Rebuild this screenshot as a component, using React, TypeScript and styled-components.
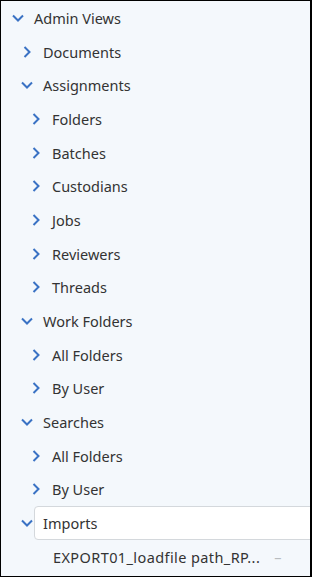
import styled, { createGlobalStyle } from "styled-components";

const GlobalStyle = createGlobalStyle`
  html, body {
    margin: 0;
    padding: 0;
    background: #ffffff;
  }
`;

const Panel = styled("div")`
  width: 312px;
  height: 577px;
  box-sizing: border-box;
  border: 1px solid #000;
  border-right-width: 2px;
  background: #f4f8fc;
  overflow: hidden;
  font-family: "Noto Sans", sans-serif;
  font-size: 14.5px;
  color: #333;
`;

const Row = styled("div")<{ $level: number }>`
  height: 33.7px;
  display: flex;
  align-items: center;
  padding-left: ${(p) => 10 + p.$level * 9}px;
  box-sizing: border-box;
`;

const Toggle = styled("span")`
  width: 14px;
  height: 16px;
  display: flex;
  align-items: center;
  justify-content: center;
  flex-shrink: 0;
  margin-right: 9px;
`;

const Label = styled("span")<{ $selected?: boolean }>`
  flex: 1;
  display: flex;
  align-items: center;
  height: 32px;
  margin-left: ${(p) => (p.$selected ? "-9px" : "0")};
  padding-left: ${(p) => (p.$selected ? "8px" : "0")};
  margin-right: ${(p) => (p.$selected ? "-4px" : "0")};
  background: ${(p) => (p.$selected ? "#fff" : "transparent")};
  border: ${(p) => (p.$selected ? "1px solid #d4d8dc" : "none")};
  border-radius: 4px;
  white-space: nowrap;
`;

const Leaf = styled("div")`
  height: 33.7px;
  display: flex;
  align-items: center;
  padding-left: 52px;
  white-space: nowrap;
  letter-spacing: 0.4px;
`;

const Dash = styled("span")`
  color: #b8bcc0;
  margin-left: 14px;
`;

const Chevron = ({ open }: { open: boolean }) => (
  <svg width="14" height="14" viewBox="0 0 14 14">
    <path
      d={open ? "M2 4.5L7 9.5L12 4.5" : "M4.5 2L9.5 7L4.5 12"}
      fill="none"
      stroke="#3a72c4"
      strokeWidth="2"
    />
  </svg>
);

type Node = { label: string; level: number; open: boolean; selected?: boolean };

const nodes: Node[] = [
  { label: "Admin Views", level: 0, open: true },
  { label: "Documents", level: 1, open: false },
  { label: "Assignments", level: 1, open: true },
  { label: "Folders", level: 2, open: false },
  { label: "Batches", level: 2, open: false },
  { label: "Custodians", level: 2, open: false },
  { label: "Jobs", level: 2, open: false },
  { label: "Reviewers", level: 2, open: false },
  { label: "Threads", level: 2, open: false },
  { label: "Work Folders", level: 1, open: true },
  { label: "All Folders", level: 2, open: false },
  { label: "By User", level: 2, open: false },
  { label: "Searches", level: 1, open: true },
  { label: "All Folders", level: 2, open: false },
  { label: "By User", level: 2, open: false },
  { label: "Imports", level: 1, open: true, selected: true },
];

const App = () => {
  return (
    <>
      <GlobalStyle />
      <Panel>
        {nodes.map((n, i) => (
          <Row key={i} $level={n.level}>
            <Toggle>
              <Chevron open={n.open} />
            </Toggle>
            <Label $selected={n.selected}>{n.label}</Label>
          </Row>
        ))}
        <Leaf>
          EXPORT01_loadfile path_RP...
          <Dash>–</Dash>
        </Leaf>
      </Panel>
    </>
  );
};

export default App;
